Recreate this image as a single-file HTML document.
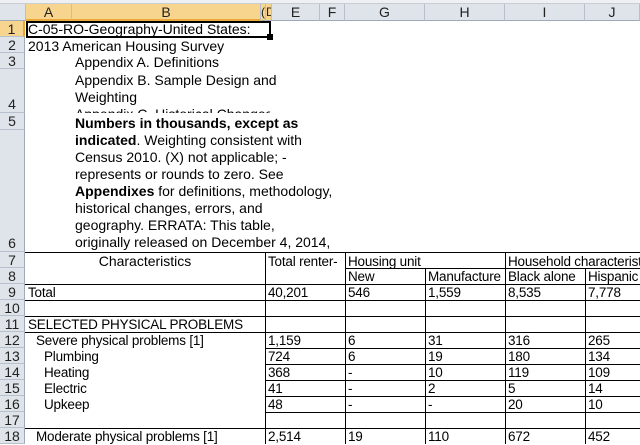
<!DOCTYPE html>
<html><head><meta charset="utf-8"><style>
body{margin:0;width:640px;height:444px;overflow:hidden;background:#fff;position:relative;font-family:"Liberation Sans",Arial,sans-serif;}
div{position:absolute;box-sizing:border-box;}
.t{font-size:14px;line-height:16px;white-space:nowrap;color:#000;}
.n{font-size:13.5px;line-height:16px;white-space:nowrap;color:#000;letter-spacing:-0.2px}
.ch{top:4px;height:17px;background:#dfe4ea;border-right:1px solid #b8c0cc;border-bottom:1px solid #9eaab9;font-size:14px;line-height:17px;text-align:center;color:#222}
.rh{left:0;width:25px;background:#dfe4ea;border-bottom:1px solid #b8c0cc;border-right:1px solid #9eaab9;font-size:14px;color:#222;text-align:center}
.b{background:#000}
</style></head><body>
<div style="left:0;top:0;width:640px;height:4px;background:#eef0f3;border-bottom:1px solid #c8cdd4"></div>
<div class="ch" style="left:0;width:26px;background:#dfe4ea"></div>
<div class="ch" style="left:26px;width:46px;background:#f8d58e;border-bottom:2px solid #e8a93a">A</div>
<div class="ch" style="left:72px;width:189px;background:#f8d58e;border-bottom:2px solid #e8a93a">B</div>
<div class="ch" style="left:261px;width:5px;background:#f8d58e;font-size:12px;overflow:hidden">(</div>
<div class="ch" style="left:266px;width:6px;background:#f8d58e;font-size:12px;overflow:hidden">D</div>
<div class="ch" style="left:272px;width:48px">E</div>
<div class="ch" style="left:320px;width:25px">F</div>
<div class="ch" style="left:345px;width:80px">G</div>
<div class="ch" style="left:425px;width:80px">H</div>
<div class="ch" style="left:505px;width:80px">I</div>
<div class="ch" style="left:585px;width:55px">J</div>

<div class="rh" style="top:21px;height:16px;line-height:16px;background:#f8d58e;border-right:2px solid #e8a93a">1</div>
<div class="rh" style="top:37px;height:16px;line-height:16px">2</div>
<div class="rh" style="top:53px;height:16px;line-height:16px">3</div>
<div class="rh" style="top:69px;height:44px;line-height:16px;padding-top:27px">4</div>
<div class="rh" style="top:113px;height:17px;line-height:17px">5</div>
<div class="rh" style="top:130px;height:122px;line-height:16px;padding-top:105px">6</div>
<div class="rh" style="top:252px;height:16px;line-height:16px">7</div>
<div class="rh" style="top:268px;height:16px;line-height:16px">8</div>
<div class="rh" style="top:284px;height:16px;line-height:16px">9</div>
<div class="rh" style="top:300px;height:16px;line-height:16px">10</div>
<div class="rh" style="top:316px;height:16px;line-height:16px">11</div>
<div class="rh" style="top:332px;height:16px;line-height:16px">12</div>
<div class="rh" style="top:348px;height:16px;line-height:16px">13</div>
<div class="rh" style="top:364px;height:16px;line-height:16px">14</div>
<div class="rh" style="top:380px;height:16px;line-height:16px">15</div>
<div class="rh" style="top:396px;height:16px;line-height:16px">16</div>
<div class="rh" style="top:412px;height:16px;line-height:16px">17</div>
<div class="rh" style="top:428px;height:16px;line-height:16px">18</div>

<div class="t" style="left:28px;top:21px">C-05-RO-Geography-United States:</div>
<div style="left:26px;top:21px;width:245px;height:17px;border:2px solid #000"></div>
<div class="b" style="left:267px;top:34px;width:6px;height:6px"></div>
<div class="t" style="left:28px;top:38px">2013 American Housing Survey</div>
<div class="t" style="left:75px;top:54px">Appendix A. Definitions</div>
<div class="t" style="left:75px;top:72px">Appendix B. Sample Design and</div>
<div class="t" style="left:75px;top:89px">Weighting</div>
<div style="left:70px;top:104px;width:200px;height:9px;overflow:hidden"><div class="t" style="left:5px;top:2px">Appendix C. Historical Changes</div></div>
<div class="t" style="left:75px;top:115px"><b>Numbers in thousands, except as</b></div>
<div class="t" style="left:75px;top:132px"><b>indicated</b>. Weighting consistent with</div>
<div class="t" style="left:75px;top:149px">Census 2010. (X) not applicable; -</div>
<div class="t" style="left:75px;top:166px">represents or rounds to zero. See</div>
<div class="t" style="left:75px;top:183px"><b>Appendixes</b> for definitions, methodology,</div>
<div class="t" style="left:75px;top:200px">historical changes, errors, and</div>
<div class="t" style="left:75px;top:217px">geography. ERRATA: This table,</div>
<div class="t" style="left:75px;top:234px">originally released on December 4, 2014,</div>

<div class="b" style="left:25px;top:252px;width:615px;height:1px"></div>
<div class="b" style="left:345px;top:268px;width:295px;height:1px"></div>
<div class="b" style="left:25px;top:284px;width:615px;height:1px"></div>
<div class="b" style="left:25px;top:300px;width:615px;height:1px"></div>
<div class="b" style="left:25px;top:316px;width:615px;height:1px"></div>
<div class="b" style="left:25px;top:332px;width:615px;height:1px"></div>
<div class="b" style="left:265px;top:348px;width:375px;height:1px"></div>
<div class="b" style="left:265px;top:364px;width:375px;height:1px"></div>
<div class="b" style="left:265px;top:380px;width:375px;height:1px"></div>
<div class="b" style="left:265px;top:396px;width:375px;height:1px"></div>
<div class="b" style="left:265px;top:412px;width:375px;height:1px"></div>
<div class="b" style="left:25px;top:428px;width:615px;height:1px"></div>
<div class="b" style="left:265px;top:252px;width:1px;height:192px"></div>
<div class="b" style="left:345px;top:252px;width:1px;height:192px"></div>
<div class="b" style="left:425px;top:268px;width:1px;height:176px"></div>
<div class="b" style="left:505px;top:252px;width:1px;height:192px"></div>
<div class="b" style="left:585px;top:268px;width:1px;height:176px"></div>

<div class="t" style="left:25px;top:253px;width:240px;text-align:center">Characteristics</div>
<div class="n" style="left:268px;top:254px">Total renter-</div>
<div class="n" style="left:348px;top:254px">Housing unit</div>
<div class="n" style="left:508px;top:254px">Household characterist</div>
<div class="n" style="left:348px;top:269px">New</div>
<div class="n" style="left:428px;top:269px">Manufacture</div>
<div class="n" style="left:508px;top:269px">Black alone</div>
<div class="n" style="left:588px;top:269px">Hispanic</div>
<div class="n" style="left:28px;top:285px">Total</div>
<div class="n" style="left:268px;top:285px">40,201</div>
<div class="n" style="left:348px;top:285px">546</div>
<div class="n" style="left:428px;top:285px">1,559</div>
<div class="n" style="left:508px;top:285px">8,535</div>
<div class="n" style="left:588px;top:285px">7,778</div>
<div class="n" style="left:28px;top:317px">SELECTED PHYSICAL PROBLEMS</div>
<div class="n" style="left:36px;top:333px">Severe physical problems [1]</div>
<div class="n" style="left:268px;top:333px">1,159</div><div class="n" style="left:348px;top:333px">6</div><div class="n" style="left:428px;top:333px">31</div><div class="n" style="left:508px;top:333px">316</div><div class="n" style="left:588px;top:333px">265</div>
<div class="n" style="left:44px;top:349px">Plumbing</div>
<div class="n" style="left:268px;top:349px">724</div><div class="n" style="left:348px;top:349px">6</div><div class="n" style="left:428px;top:349px">19</div><div class="n" style="left:508px;top:349px">180</div><div class="n" style="left:588px;top:349px">134</div>
<div class="n" style="left:44px;top:365px">Heating</div>
<div class="n" style="left:268px;top:365px">368</div><div class="n" style="left:348px;top:365px">-</div><div class="n" style="left:428px;top:365px">10</div><div class="n" style="left:508px;top:365px">119</div><div class="n" style="left:588px;top:365px">109</div>
<div class="n" style="left:44px;top:381px">Electric</div>
<div class="n" style="left:268px;top:381px">41</div><div class="n" style="left:348px;top:381px">-</div><div class="n" style="left:428px;top:381px">2</div><div class="n" style="left:508px;top:381px">5</div><div class="n" style="left:588px;top:381px">14</div>
<div class="n" style="left:44px;top:397px">Upkeep</div>
<div class="n" style="left:268px;top:397px">48</div><div class="n" style="left:348px;top:397px">-</div><div class="n" style="left:428px;top:397px">-</div><div class="n" style="left:508px;top:397px">20</div><div class="n" style="left:588px;top:397px">10</div>
<div class="n" style="left:36px;top:429px">Moderate physical problems [1]</div>
<div class="n" style="left:268px;top:429px">2,514</div><div class="n" style="left:348px;top:429px">19</div><div class="n" style="left:428px;top:429px">110</div><div class="n" style="left:508px;top:429px">672</div><div class="n" style="left:588px;top:429px">452</div>
</body></html>
